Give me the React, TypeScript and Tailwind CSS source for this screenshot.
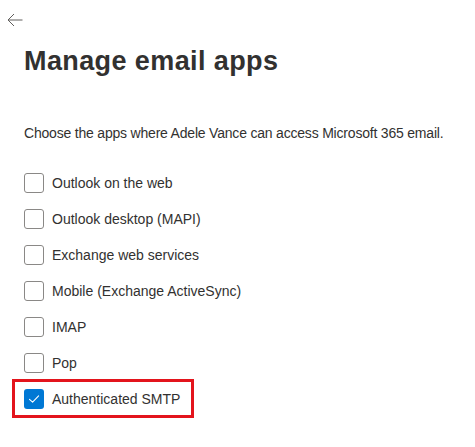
import React, { useState } from 'react';

const apps = [
  'Outlook on the web',
  'Outlook desktop (MAPI)',
  'Exchange web services',
  'Mobile (Exchange ActiveSync)',
  'IMAP',
  'Pop',
  'Authenticated SMTP',
];

function Check({ checked }: { checked: boolean }) {
  return (
    <span
      className={
        checked
          ? 'flex h-5 w-5 items-center justify-center rounded-[3px] bg-[#0078d4]'
          : 'flex h-5 w-5 items-center justify-center rounded-[3px] border border-[#8a8886] bg-white'
      }
    >
      {checked && (
        <svg width="12" height="12" viewBox="0 0 12 12" fill="none">
          <path d="M1.5 6.3 L4.6 9.2 L10.6 2.9" stroke="white" strokeWidth="1.1" strokeLinecap="round" strokeLinejoin="round" />
        </svg>
      )}
    </span>
  );
}

export default function App() {
  const [picked, setPicked] = useState<Record<string, boolean>>({ 'Authenticated SMTP': true });

  return (
    <div className="h-[447px] w-[475px] overflow-hidden bg-white text-[#323130] [font-family:'Liberation_Sans',Arial,sans-serif]">
      {/* 戻る */}
      <button className="ml-[7px] mt-[13px] block h-[14px] w-4">
        <svg width="16" height="14" viewBox="0 0 16 14" fill="none">
          <path d="M15.5 7H1 M7 1 L1 7 L7 13" stroke="#605e5c" strokeWidth="1" />
        </svg>
      </button>

      <div className="pl-6">
        <h1 className="mt-[18px] text-[27px] font-bold leading-8 tracking-[0.4px]">Manage email apps</h1>

        <p className="mt-[46px] text-[14px] leading-5 tracking-[-0.2px]">
          Choose the apps where Adele Vance can access Microsoft 365 email.
        </p>

        <div className="mt-[22px] flex flex-col">
          {apps.map((name) => {
            const last = name === 'Authenticated SMTP';
            return (
              <label
                key={name}
                className="relative flex h-9 cursor-pointer items-center gap-2"
                onClick={() => setPicked((p) => ({ ...p, [name]: !p[name] }))}
              >
                <Check checked={!!picked[name]} />
                <span className="text-[14px] leading-5">{name}</span>
                {last && (
                  <span className="pointer-events-none absolute -left-3 -top-0.5 h-[39px] w-[182px] border-[3px] border-[#e3141c]" />
                )}
              </label>
            );
          })}
        </div>
      </div>
    </div>
  );
}
